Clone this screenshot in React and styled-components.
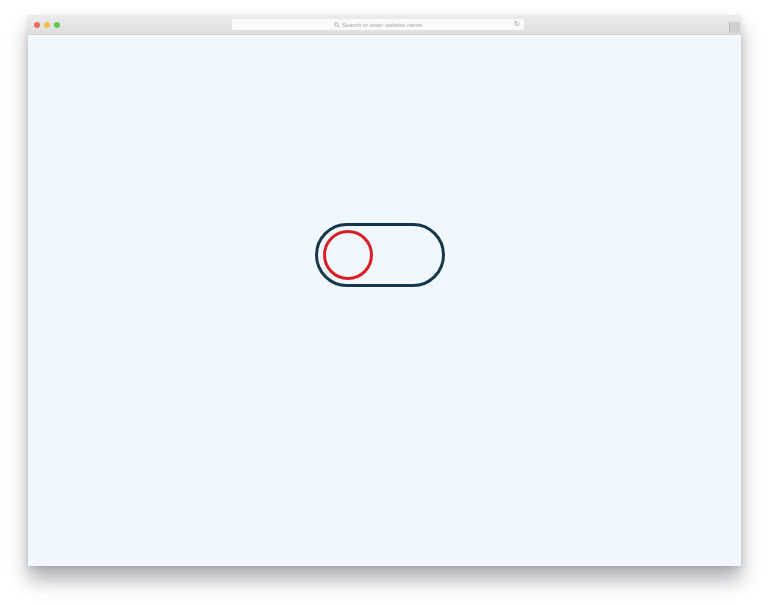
import React from "react";
import styled, { createGlobalStyle } from "styled-components";

const GlobalStyle = createGlobalStyle`
  html, body {
    margin: 0;
    padding: 0;
    background: #ffffff;
    font-family: "Liberation Sans", Arial, sans-serif;
  }
`;

const Page = styled.div`
  width: 768px;
  height: 605px;
  padding: 15px 27px 0 28px;
  box-sizing: border-box;
`;

const Window = styled.div`
  width: 713px;
  height: 551px;
  display: flex;
  flex-direction: column;
  background: #f0f8fd;
  box-shadow: 0 14px 18px rgba(60, 66, 75, 0.4), 0 2px 6px rgba(0, 0, 0, 0.12);
`;

const TitleBar = styled.div`
  height: 19px;
  flex-shrink: 0;
  display: flex;
  align-items: center;
  padding: 0 6px;
  background: linear-gradient(#ececec, #dedede);
  border-bottom: 1px solid #d2d2d2;
  position: relative;
`;

const Dots = styled.div`
  display: flex;
  gap: 4px;
`;

const Dot = styled.span`
  width: 6px;
  height: 6px;
  border-radius: 50%;
  background: ${(p) => p.color};
`;

const AddressBar = styled.div`
  position: absolute;
  left: 204px;
  top: 4px;
  width: 292px;
  height: 11px;
  background: #fafafa;
  border-radius: 2px;
  display: flex;
  align-items: center;
  justify-content: center;
  gap: 2px;
  font-size: 6px;
  color: #a9a9a9;
`;

const Reload = styled.span`
  position: absolute;
  right: 4px;
  top: 1px;
  font-size: 7px;
  color: #9a9a9a;
`;

const TabButton = styled.div`
  position: absolute;
  right: 1px;
  top: 7px;
  width: 10px;
  height: 11px;
  background: #cfcfcf;
  border-left: 1px solid #bdbdbd;
`;

const Content = styled.div`
  flex: 1;
  display: flex;
  align-items: flex-start;
  justify-content: center;
  padding-top: 188px;
  padding-right: 10px;
`;

const Toggle = styled.div`
  width: 130px;
  height: 64px;
  box-sizing: border-box;
  border: 3px solid #16374a;
  border-radius: 32px;
  display: flex;
  align-items: center;
  padding-left: 5px;
`;

const Knob = styled.div`
  width: 50px;
  height: 50px;
  box-sizing: border-box;
  border: 3px solid #d71f26;
  border-radius: 50%;
`;

export default function App() {
  return (
    <>
      <GlobalStyle />
      <Page>
        <Window>
          <TitleBar>
            <Dots>
              <Dot color="#ee6a5f" />
              <Dot color="#f5bf4f" />
              <Dot color="#62c655" />
            </Dots>
            <AddressBar>
              <svg width="6" height="6" viewBox="0 0 10 10">
                <circle cx="4" cy="4" r="3" fill="none" stroke="#a0a0a0" strokeWidth="1.3" />
                <line x1="6.2" y1="6.2" x2="9" y2="9" stroke="#a0a0a0" strokeWidth="1.3" />
              </svg>
              Search or enter website name
              <Reload>↻</Reload>
            </AddressBar>
            <TabButton />
          </TitleBar>
          <Content>
            <Toggle>
              <Knob />
            </Toggle>
          </Content>
        </Window>
      </Page>
    </>
  );
}
